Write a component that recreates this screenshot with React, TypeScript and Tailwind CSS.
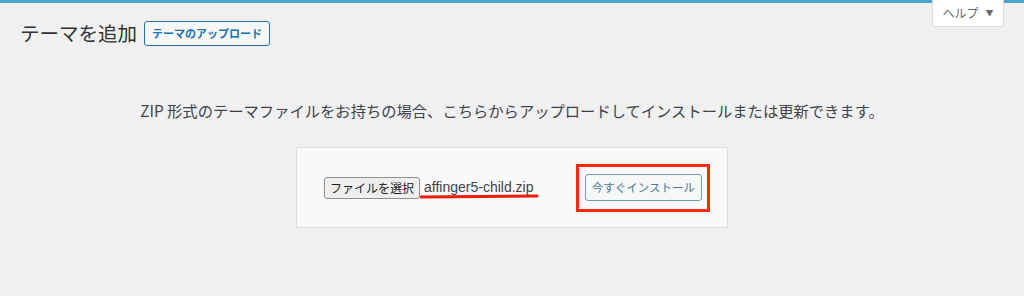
export default function App() {
  return (
    <div className="relative h-[296px] w-[1024px] overflow-hidden bg-[#f0f0f1] font-['Noto_Sans_CJK_JP','Liberation_Sans',sans-serif] text-[#1d2327]">
      <div className="h-[3px] bg-[#4ca6cf]" />

      {/* help tab */}
      <div className="absolute right-[20px] top-0 flex h-[27px] w-[72px] items-center justify-center gap-[7px] rounded-b border border-t-0 border-[#dcdcde] bg-white text-[12px] text-[#646970]">
        <span>ヘルプ</span>
        <span className="text-[8px]">▼</span>
      </div>

      <div className="flex items-center gap-[7px] pl-[20px] pt-[15px]">
        <h1 className="text-[19.5px] font-normal leading-[30px] text-[#2c3338]">テーマを追加</h1>
        <button className="h-[25px] rounded-[3px] border border-[#2271b1] bg-[#f6f7f7] px-[7px] text-[11px] font-bold leading-none text-[#2271b1]">
          テーマのアップロード
        </button>
      </div>

      <p className="mt-[52px] text-center text-[15.3px] leading-[20px] text-[#3c434a]">
        ZIP 形式のテーマファイルをお持ちの場合、こちらからアップロードしてインストールまたは更新できます。
      </p>

      <div className="mx-auto mt-[27px] flex h-[81px] w-[432px] items-center border border-[#dcdcde] bg-[#f9f9f9] pl-[27px]">
        <div className="relative flex items-center">
          <button className="h-[22px] w-[96px] rounded-[3px] border border-[#8f8f8f] bg-[#efefef] text-[12px] leading-none text-[#1d1d1d]">
            ファイルを選択
          </button>
          <span className="ml-[4px] font-['Liberation_Sans',sans-serif] text-[14px] text-[#3c434a]">affinger5-child.zip</span>
          <svg className="absolute left-[96px] top-[15px]" width="120" height="8" viewBox="0 0 120 8">
            <path d="M1 5 L117 4" stroke="#f21c0c" strokeWidth="3" strokeLinecap="round" />
          </svg>
        </div>
        <div className="ml-[43px] flex h-[48px] w-[134px] items-center justify-center border-[3px] border-[#f72a10]">
          <button className="h-[27px] w-[117px] rounded-[3px] border border-[#6b9dbd] bg-[#f6f7f7] text-[11.5px] leading-none text-[#4a7593]">
            今すぐインストール
          </button>
        </div>
      </div>
    </div>
  );
}
